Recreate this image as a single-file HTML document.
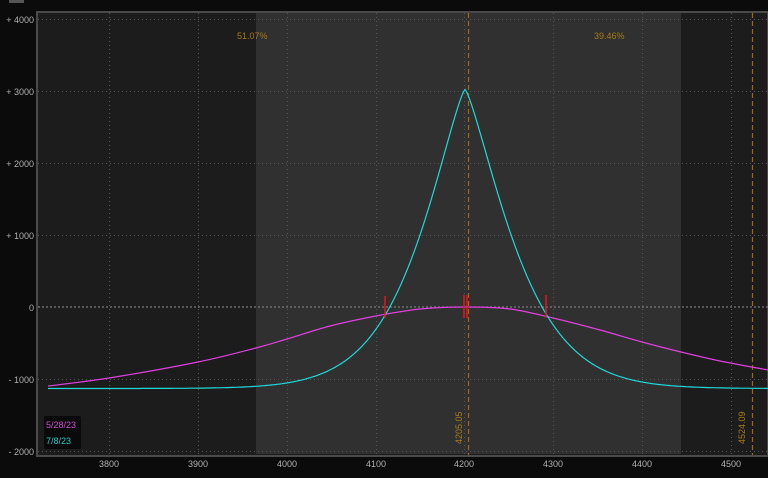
<!DOCTYPE html>
<html><head><meta charset="utf-8"><style>
html,body{margin:0;padding:0;background:#0b0b0b;width:768px;height:478px;overflow:hidden;font-family:"Liberation Sans",sans-serif}
svg{position:absolute;left:0;top:0}
</style></head><body>
<svg id="s" width="768" height="478" viewBox="0 0 768 478" xmlns="http://www.w3.org/2000/svg">
<rect x="0" y="0" width="768" height="478" fill="#0b0b0b"/>
<rect x="9" y="0" width="15" height="3" fill="#555"/>
<rect x="37" y="12" width="731" height="444" fill="#1c1c1c" stroke="#4a4a4a" stroke-width="2"/>
<rect x="256" y="13" width="425" height="441" fill="#303030"/>
<g stroke="#555" stroke-width="1" stroke-dasharray="1,3">
<line x1="109.5" y1="13" x2="109.5" y2="455"/><line x1="198.5" y1="13" x2="198.5" y2="455"/>
<line x1="287.5" y1="13" x2="287.5" y2="455"/><line x1="376.5" y1="13" x2="376.5" y2="455"/>
<line x1="464.5" y1="13" x2="464.5" y2="455"/><line x1="553.5" y1="13" x2="553.5" y2="455"/>
<line x1="642.5" y1="13" x2="642.5" y2="455"/><line x1="731.5" y1="13" x2="731.5" y2="455"/>
<line x1="38" y1="19.5" x2="768" y2="19.5"/><line x1="38" y1="91.5" x2="768" y2="91.5"/>
<line x1="38" y1="163.5" x2="768" y2="163.5"/><line x1="38" y1="235.5" x2="768" y2="235.5"/>
<line x1="38" y1="379.5" x2="768" y2="379.5"/><line x1="38" y1="451.5" x2="768" y2="451.5"/>
</g>
<line x1="38" y1="307" x2="768" y2="307" stroke="#7a7a7a" stroke-width="1.2" stroke-dasharray="2,2"/>
<g stroke="#9a6a12" stroke-width="1.2" stroke-dasharray="5,3">
<line x1="468.5" y1="13" x2="468.5" y2="455"/><line x1="752.5" y1="13" x2="752.5" y2="455"/>
</g>
<g fill="#a87a14" font-size="9">
<text x="237" y="39">51.07%</text><text x="594" y="39">39.46%</text>
<text transform="translate(462,444) rotate(-90)">4205.05</text>
<text transform="translate(745,444) rotate(-90)">4524.09</text>
</g>
<path id="mag" fill="none" stroke="#e040e0" stroke-width="1.2"/>
<path id="cy" fill="none" stroke="#20d8d8" stroke-width="1.2"/>
<g stroke="#e01818" stroke-width="1.5">
<line x1="385" y1="296" x2="385" y2="318"/><line x1="464" y1="295" x2="464" y2="318"/>
<line x1="467" y1="295" x2="467" y2="318"/><line x1="546" y1="295" x2="546" y2="318"/>
</g>
<g fill="#b0b0b0" font-size="9" text-anchor="end">
<text x="34" y="23">+ 4000</text><text x="34" y="95">+ 3000</text><text x="34" y="167">+ 2000</text>
<text x="34" y="239">+ 1000</text><text x="34" y="311">0</text><text x="34" y="383">- 1000</text><text x="34" y="455">- 2000</text>
</g>
<g fill="#b0b0b0" font-size="9" text-anchor="middle">
<text x="109" y="467">3800</text><text x="198" y="467">3900</text><text x="287" y="467">4000</text>
<text x="376" y="467">4100</text><text x="464" y="467">4200</text><text x="553" y="467">4300</text>
<text x="642" y="467">4400</text><text x="731" y="467">4500</text>
</g>
<rect x="44" y="416" width="37" height="33" rx="2" fill="#0a0a0a"/>
<text x="46" y="428" font-size="9" fill="#d050d0">5/28/23</text>
<text x="46" y="444" font-size="9" fill="#20c8c8">7/8/23</text>
</svg>
<script>
function cr(p){var d="M"+p[0][0]+","+p[0][1];for(var i=0;i<p.length-1;i++){var p0=p[i-1]||p[i],p1=p[i],p2=p[i+1],p3=p[i+2]||p2;
var c1=[p1[0]+(p2[0]-p0[0])/6,p1[1]+(p2[1]-p0[1])/6],c2=[p2[0]-(p3[0]-p1[0])/6,p2[1]-(p3[1]-p1[1])/6];
d+=" C"+c1+" "+c2+" "+p2;}return d;}
document.getElementById("mag").setAttribute("d",cr([[48,386],[109,378],[198,362],[256,348],[287,339],[330,326],[376,316],[420,309],[465,307],[510,309],[553,318],[600,330],[642,342],[681,352],[720,361],[768,370]]));
var d="";for(var x=48;x<=768;x++){var dx=x-465,k=dx<0?61.5:63;var h=299*Math.exp(-Math.pow(Math.abs(dx)/k,1.3));var y=388.5-h;d+=(x==48?"M":"L")+x+","+y.toFixed(1);}
document.getElementById("cy").setAttribute("d",d);
</script>
</body></html>
